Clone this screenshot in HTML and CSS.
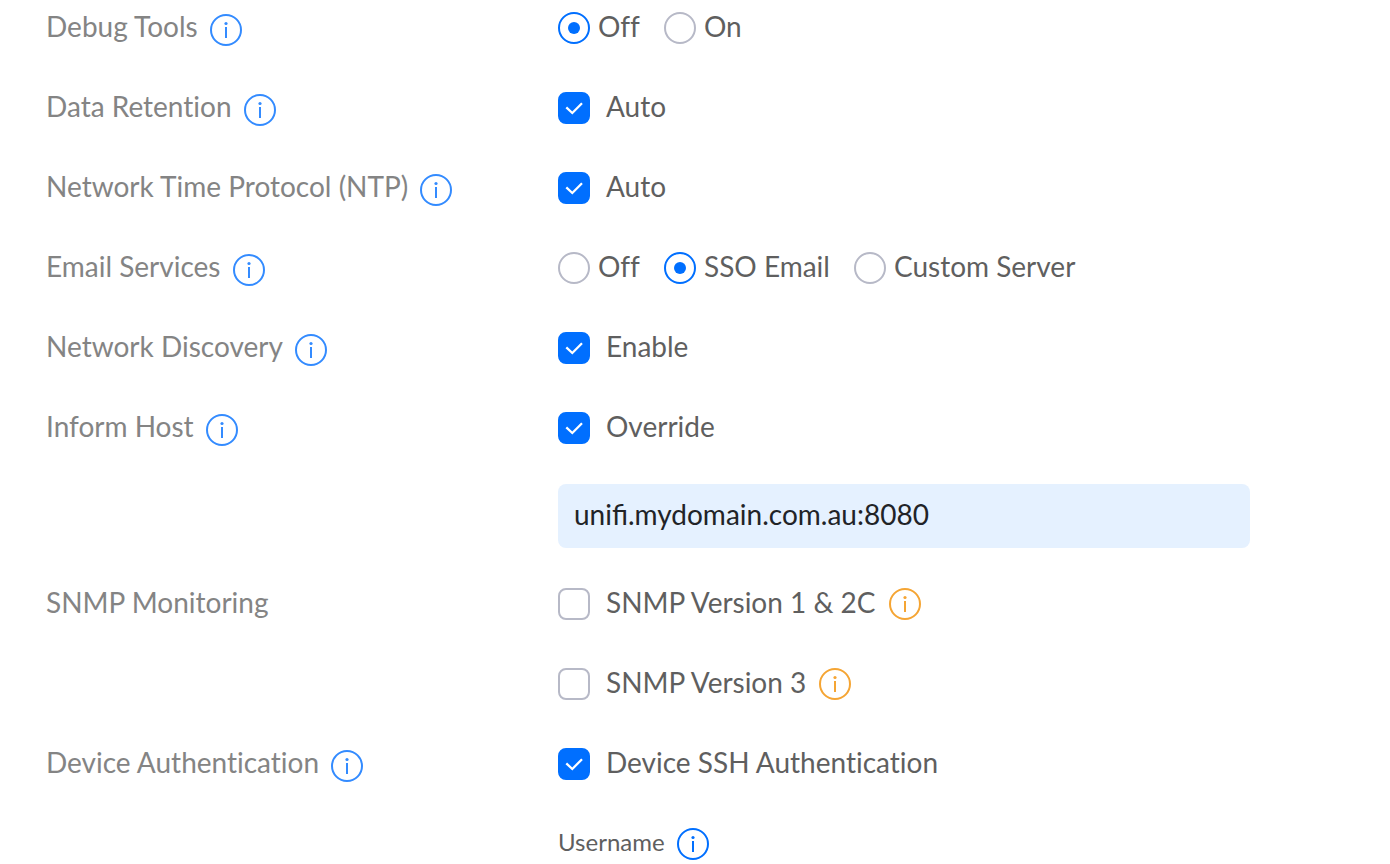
FILE: index.html
```html
<!DOCTYPE html>
<html lang="en">
<head>
    <meta charset="UTF-8">
    <meta name="viewport" content="width=device-width, initial-scale=1.0">
    <title>Network Settings</title>
    <link rel="stylesheet" href="styles.css">
</head>
<body>
    <svg class="hidden">
        <symbol id="info" viewBox="0 0 32 32">
            <circle cx="16" cy="16" r="15" fill="none" stroke="currentColor" stroke-width="2"/>
            <path d="M16 13v11" fill="none" stroke="currentColor" stroke-width="2"/>
            <circle cx="16" cy="9.5" r="1.6" fill="currentColor"/>
        </symbol>
    </svg>

    <form class="settings">
        <div class="row">
            <div class="label"><span>Debug Tools</span><svg class="info"><use href="#info"/></svg></div>
            <div class="field">
                <label class="radio"><input type="radio" name="debug" checked><span>Off</span></label>
                <label class="radio"><input type="radio" name="debug"><span>On</span></label>
            </div>
        </div>
        <div class="row">
            <div class="label"><span>Data Retention</span><svg class="info"><use href="#info"/></svg></div>
            <div class="field">
                <label class="check"><input type="checkbox" checked><span>Auto</span></label>
            </div>
        </div>
        <div class="row">
            <div class="label"><span>Network Time Protocol (NTP)</span><svg class="info"><use href="#info"/></svg></div>
            <div class="field">
                <label class="check"><input type="checkbox" checked><span>Auto</span></label>
            </div>
        </div>
        <div class="row">
            <div class="label"><span>Email Services</span><svg class="info"><use href="#info"/></svg></div>
            <div class="field">
                <label class="radio"><input type="radio" name="email"><span>Off</span></label>
                <label class="radio"><input type="radio" name="email" checked><span>SSO Email</span></label>
                <label class="radio"><input type="radio" name="email"><span>Custom Server</span></label>
            </div>
        </div>
        <div class="row">
            <div class="label"><span>Network Discovery</span><svg class="info"><use href="#info"/></svg></div>
            <div class="field">
                <label class="check"><input type="checkbox" checked><span>Enable</span></label>
            </div>
        </div>
        <div class="row">
            <label class="label" for="inform-host"><span>Inform Host</span><svg class="info"><use href="#info"/></svg></label>
            <div class="field">
                <label class="check"><input type="checkbox" checked><span>Override</span></label>
            </div>
        </div>
        <div class="row host-row">
            <input type="text" class="text-input" id="inform-host" value="unifi.mydomain.com.au:8080">
        </div>
        <div class="row">
            <div class="label"><span>SNMP Monitoring</span></div>
            <div class="field">
                <label class="check"><input type="checkbox"><span>SNMP Version 1 &amp; 2C</span></label>
                <svg class="info warning"><use href="#info"/></svg>
            </div>
        </div>
        <div class="row">
            <div class="field">
                <label class="check"><input type="checkbox"><span>SNMP Version 3</span></label>
                <svg class="info warning"><use href="#info"/></svg>
            </div>
        </div>
        <div class="row">
            <div class="label"><span>Device Authentication</span><svg class="info"><use href="#info"/></svg></div>
            <div class="field">
                <label class="check"><input type="checkbox" checked><span>Device SSH Authentication</span></label>
            </div>
        </div>
        <div class="row">
            <div class="field username"><span>Username</span><svg class="info"><use href="#info"/></svg></div>
        </div>
    </form>
</body>
</html>
```

FILE: styles.css
```css
* {
    box-sizing: border-box;
}
body {
    margin: 0;
    background: #fff;
    color: #5f5f5f;
    font-family: Lato, sans-serif;
    font-size: 28px;
    line-height: 32px;
    overflow: hidden;
}
.hidden {
    display: none;
}
.settings {
    padding: 0 46px;
}
.row {
    display: grid;
    grid-template-columns: 512px 1fr;
    align-items: center;
    height: 80px;
    font-variant-ligatures: none;
}
.row:first-child {
    height: 56px;
    margin-bottom: 12px;
}
.row span {
    padding-bottom: 4px;
}
.label {
    display: flex;
    align-items: center;
    gap: 12px;
    color: #848484;
}
.label .info {
    margin-top: 4px;
    color: #338bff;
}
.field {
    grid-column: 2;
    display: flex;
    align-items: center;
}
.info {
    flex: none;
    width: 32px;
    height: 32px;
    color: #006fff;
}
.warning {
    margin-left: 13px;
    color: #f5a534;
}
.radio,
.check {
    display: flex;
    align-items: center;
}
.radio {
    gap: 8px;
    margin-right: 24px;
}
.check {
    gap: 16px;
}
.radio input,
.check input {
    appearance: none;
    flex: none;
    width: 32px;
    height: 32px;
    margin: 0;
    border: 2px solid #b7b9c7;
    background: #fff center no-repeat;
}
.radio input {
    border-radius: 50%;
}
.radio input:checked {
    border-color: #006fff;
    background-image: url("data:image/svg+xml,%3Csvg xmlns='http://www.w3.org/2000/svg' width='32' height='32'%3E%3Ccircle cx='16' cy='16' r='6' fill='%23006fff'/%3E%3C/svg%3E");
}
.check input {
    border-radius: 8px;
}
.check input:checked {
    border-color: #006fff;
    background-color: #006fff;
    background-image: url("data:image/svg+xml,%3Csvg xmlns='http://www.w3.org/2000/svg' width='32' height='32'%3E%3Cpath d='M8.3 15.4l6 5.6 9.7-9.8' fill='none' stroke='white' stroke-width='2.3'/%3E%3C/svg%3E");
}
.host-row {
    height: 96px;
    font-variant-ligatures: normal;
}
.text-input {
    grid-column: 2;
    width: 88%;
    height: 64px;
    padding: 0 16px 4px;
    border: none;
    border-radius: 8px;
    background: #e5f1ff;
    color: #212327;
    font: inherit;
}
.username {
    gap: 12px;
    font-size: 24px;
}
```
